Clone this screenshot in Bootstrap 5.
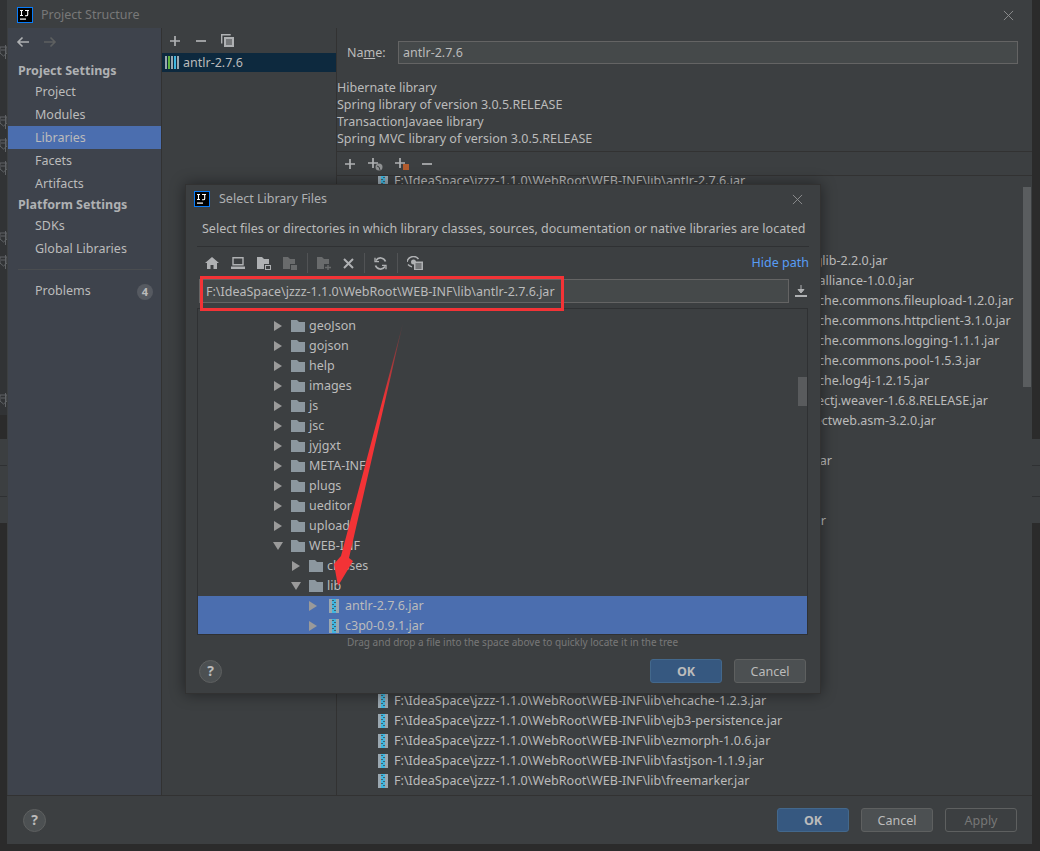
<!DOCTYPE html>
<html lang="en">
<head>
  <meta charset="UTF-8">
  <title>Project Structure</title>
  <meta name="viewport" content="width=device-width, initial-scale=1">
  <link href="https://cdn.jsdelivr.net/npm/bootstrap@5.3.3/dist/css/bootstrap.min.css" rel="stylesheet">
  <style>
    html, body { height: 851px; overflow: hidden; }
    body { background: #2b2b2b; font-family: "Noto Sans", "Liberation Sans", sans-serif; font-size: 12.5px; color: #bbbbbb; position: relative; line-height: 1; }
    svg { display: block; flex: none; }
    .gutter { position: absolute; top: 0; width: 7px; height: 415px; background: #313335; }
    .gutter-l { left: 0; }
    .gutter-r { left: 1032px; width: 8px; background: #2b2b2b; }
    .under-bar { position: absolute; top: 439px; height: 84px; width: 7px; left: 0; background: linear-gradient(#3c3f41 26px, #2f3133 26px, #2f3133 27px, #3c3f41 27px, #3c3f41 57px, #2f3133 57px, #2f3133 58px, #3c3f41 58px); }
    .under-bar-r { left: 1032px; width: 8px; }
    .win { position: absolute; left: 7px; top: 0; width: 1025px; height: 844px; background: #3c3f41; }
    .win-title { height: 28px; padding: 2px 0 0 10px; color: #787878; }
    .win-close { margin-left: auto; margin-right: 18px; }
    .win-body { height: 768px; border-bottom: 1px solid #323232; }
    .side { width: 154px; margin-left: 1px; background: #3e434c; border-right: 1px solid #323232; padding-top: 3px; }
    .side-nav { height: 21px; padding-left: 8px; gap: 13px; margin-bottom: 9px; }
    .side-head { height: 19px; padding: 2px 0 0 10px; font-weight: 700; color: #afb1b3; }
    .side-item { height: 23px; padding: 2px 0 0 27px; }
    .side-item.on { background: #4b6eaf; }
    .side-sep { height: 1px; background: #4a4d50; margin: 9px 9px 9px 10px; }
    .side-badge { width: 16px; height: 16px; border-radius: 50%; background: #565a61; margin-left: auto; margin-right: 8px; font-size: 11px; font-weight: 700; }
    .mid { width: 175px; border-right: 1px solid #323232; }
    .mid-bar { height: 25px; padding-left: 7px; gap: 14px; }
    .mid-sel { height: 19px; background: #0d293e; padding-left: 3px; gap: 4px; }
    .mid-sel span { padding-top: 2px; }
    .det { flex: 1; min-width: 0; }
    .name-row { height: 36px; margin-top: 13px; }
    .name-row label { margin: 0 10px; width: 41px; height: 23px; padding-top: 2px; }
    .fake-input { background: #45494a; border: 1px solid #646464; height: 23px; padding: 2px 0 0 4px; color: #bbbbbb; }
    .name-row .fake-input { width: 620px; }
    .det-lines { padding-top: 5px; height: 74px; }
    .det-line { height: 17px; }
    .det-bar { height: 25px; border-top: 1px solid #323232; border-bottom: 1px solid #323232; padding-left: 7px; gap: 11px; }
    .det-list { position: relative; flex: 1; overflow: hidden; }
    .jar-row { height: 20px; padding-left: 41px; gap: 6px; white-space: nowrap; font-size: 12.6px; }
    .det-scroll + .jar-row { margin-top: -5px; }
    .jar-row.long-name { font-size: 12.5px; }
    .det-scroll { position: absolute; right: 1px; top: 11px; width: 8px; height: 200px; background: #5a5d5f; }
    .win-foot { height: 47px; padding: 1px 15px 0 16px; gap: 12px; }
    .help { width: 23px; height: 23px; border-radius: 50%; background: #4c5052; border: 1px solid #5e6060; color: #bbbbbb; font-weight: 700; font-size: 14px; margin-right: auto; }
    .ij-btn { width: 72px; height: 24px; border-radius: 3px; background: #4c5052; border: 1px solid #5e6060; color: #bbbbbb; padding: 2px 0 0; font-size: 12.5px; line-height: 1; }
    .ij-btn:hover { background: #4c5052; border-color: #5e6060; color: #bbbbbb; }
    .ij-btn.pri { background: #365880; border-color: #43688c; font-weight: 700; }
    .ij-btn.off, .ij-btn.off:disabled { background: transparent; border-color: #5e6060; color: #777777; opacity: 1; }
    .dlg { position: absolute; left: 185px; top: 184px; width: 636px; height: 510px; background: #3c3f41; box-shadow: 0 0 14px rgba(0,0,0,.45); border: 1px solid #323232; }
    .dlg-title { height: 28px; padding-left: 8px; gap: 9px; color: #afb1b3; }
    .dlg-close { margin-left: auto; margin-right: 17px; }
    .dlg-desc { height: 34px; padding-left: 5px; border-bottom: 1px solid #2f3133; margin: 0 11px; white-space: nowrap; }
    .dlg-bar { height: 32px; padding-left: 19px; margin-right: 11px; }
    .dlg-bar svg { margin-right: 12px; }
    .tool-sep { width: 1px; height: 20px; background: #515355; margin: 0 9px 0 -2px; }
    .hide-link { margin-left: auto; color: #589df6; }
    .path-row { height: 24px; padding-left: 13px; }
    .path-row .fake-input { width: 590px; height: 24px; padding-left: 6px; white-space: nowrap; }
    .path-row svg { margin-left: 6px; }
    .tree { position: relative; margin: 5px 12px 0 11px; height: 327px; padding-top: 7px; border: 1px solid #2f3133; overflow: hidden; }
    .tree-row { height: 20px; white-space: nowrap; }
    .tree-row.on { background: #4b6eaf; }
    .lv1 { padding-left: 75px; }
    .lv2 { padding-left: 93px; }
    .lv3 { padding-left: 110px; }
    .tree-row .arr { margin-right: 8px; }
    .tree-row .fold { margin-right: 4px; }
    .tree-row .jarico { margin: 0 6px 0 3px; }
    .tree-scroll { position: absolute; right: 0; top: 68px; width: 9px; height: 29px; background: #595b5d; }
    .tree-tip { padding-left: 161px; height: 14px; font-size: 10px; color: #787878; }
    .dlg-foot { position: absolute; left: 13px; right: 14px; top: 474px; gap: 12px; }
    .anno { position: absolute; left: 0; top: 0; pointer-events: none; }
    .anno-box { position: absolute; left: 200px; top: 276px; width: 364px; height: 35px; border: 3px solid #f33336; }
  </style>
</head>
<body>
  <svg width="0" height="0" class="position-absolute">
    <symbol id="ij" viewBox="0 0 16 16"><rect x=".5" y=".5" width="15" height="15" fill="#000" stroke="#087cfa"/><rect x="3" y="11.5" width="6" height="1.2" fill="#fff"/><path d="M3 3.5h3M4.5 3.5v5M3 8.5h3M8 3.5h4M10.7 3.5v4.2q0 1-1.2 1H8" fill="none" stroke="#fff" stroke-width="1.1"/></symbol>
    <symbol id="jar" viewBox="0 0 10 14"><rect width="10" height="14" fill="#9aa7b0"/><rect x="3" width="4" height="14" fill="#40b6e0"/><path d="M3 1.5h2M5 3.5h2M3 5.5h2M5 7.5h2M3 9.5h2M5 11.5h2" stroke="#3c3f41" stroke-width=".7"/></symbol>
    <symbol id="fold" viewBox="0 0 14 12"><path d="M0 0h6l2 2h6v10H0z" fill="#9aa7b0" opacity=".85"/></symbol>
    <symbol id="right" viewBox="0 0 10 10"><path d="M1 0l8 5-8 5z" fill="#9a9a9a"/></symbol>
    <symbol id="down" viewBox="0 0 10 10"><path d="M0 1h10L5 9z" fill="#9a9a9a"/></symbol>
    <symbol id="plus" viewBox="0 0 12 12"><path d="M1 6h10M6 1v10" stroke="#afb1b3" stroke-width="1.7"/></symbol>
    <symbol id="minus" viewBox="0 0 12 12"><path d="M1 6h10" stroke="#afb1b3" stroke-width="1.7"/></symbol>
    <symbol id="x" viewBox="0 0 12 12"><path d="M1 1l10 10M11 1L1 11" stroke="#8f9192" stroke-width="1"/></symbol>
    <symbol id="foldmark" viewBox="0 0 7 14"><path d="M5.500 0v14M0 2h7v6l-3.500 3L0 8zM1 5h4" fill="none" stroke="#606366"/></symbol>
  </svg>

  <!-- editor behind the dialogs -->
  <div class="gutter gutter-l d-flex flex-column" id="gutter"></div>
  <div class="gutter gutter-r"></div>
  <div class="under-bar"></div>
  <div class="under-bar under-bar-r"></div>

  <div class="win d-flex flex-column">
    <div class="win-title d-flex align-items-center gap-2">
      <svg width="16" height="16"><use href="#ij"/></svg>
      <span>Project Structure</span>
      <svg class="win-close" width="11" height="11"><use href="#x"/></svg>
    </div>
    <div class="win-body d-flex">
      <div class="side d-flex flex-column">
        <div class="side-nav d-flex align-items-center">
          <svg width="14" height="12" viewBox="0 0 14 12"><path d="M13 6H2M6.5 1.5L2 6l4.500 4.500" fill="none" stroke="#afb1b3" stroke-width="1.6"/></svg>
          <svg width="14" height="12" viewBox="0 0 14 12"><path d="M1 6h11M7.500 1.500L12 6l-4.500 4.500" fill="none" stroke="#5e6060" stroke-width="1.6"/></svg>
        </div>
        <div class="side-head d-flex align-items-center">Project Settings</div>
        <div class="side-item d-flex align-items-center">Project</div>
        <div class="side-item d-flex align-items-center">Modules</div>
        <div class="side-item on d-flex align-items-center">Libraries</div>
        <div class="side-item d-flex align-items-center">Facets</div>
        <div class="side-item d-flex align-items-center">Artifacts</div>
        <div class="side-head d-flex align-items-center">Platform Settings</div>
        <div class="side-item d-flex align-items-center">SDKs</div>
        <div class="side-item d-flex align-items-center">Global Libraries</div>
        <div class="side-sep"></div>
        <div class="side-item d-flex align-items-center">Problems<span class="side-badge d-flex align-items-center justify-content-center">4</span></div>
      </div>
      <div class="mid d-flex flex-column">
        <div class="mid-bar d-flex align-items-center">
          <svg width="12" height="12"><use href="#plus"/></svg>
          <svg width="12" height="12"><use href="#minus"/></svg>
          <svg width="13" height="13" viewBox="0 0 13 13"><path d="M.7 0v9.500M.7.700h9" fill="none" stroke="#afb1b3" stroke-width="1.400"/><rect x="3" y="3" width="10" height="10" fill="#afb1b3"/><path d="M5 6h6M5 8h6M5 10h6" stroke="#3c3f41"/></svg>
        </div>
        <div class="mid-sel d-flex align-items-center">
          <svg width="14" height="13" viewBox="0 0 14 13"><rect x="0" width="2" height="13" fill="#9aa7b0"/><rect x="3" width="2" height="13" fill="#62b543"/><rect x="6" width="2" height="13" fill="#9aa7b0"/><rect x="9" width="2" height="13" fill="#40b6e0"/><rect x="12" width="2" height="13" fill="#9aa7b0"/></svg>
          <span>antlr-2.7.6</span>
        </div>
      </div>
      <div class="det d-flex flex-column">
        <div class="name-row d-flex">
          <label class="d-flex align-items-center"><span>Na<u>m</u>e:</span></label>
          <div class="fake-input d-flex align-items-center">antlr-2.7.6</div>
        </div>
        <div class="det-lines">
          <div class="det-line">Hibernate library</div>
          <div class="det-line">Spring library of version 3.0.5.RELEASE</div>
          <div class="det-line">TransactionJavaee library</div>
          <div class="det-line">Spring MVC library of version 3.0.5.RELEASE</div>
        </div>
        <div class="det-bar d-flex align-items-center">
          <svg width="12" height="12"><use href="#plus"/></svg>
          <svg width="16" height="14" viewBox="0 0 16 14"><path d="M1 6h10M6 1v10" stroke="#afb1b3" stroke-width="1.700"/><circle cx="12" cy="10" r="3.500" fill="#8f9192"/><path d="M10 9l2 1 1 3" stroke="#3c3f41" fill="none"/></svg>
          <svg width="16" height="14" viewBox="0 0 16 14"><path d="M1 6h10M6 1v10" stroke="#afb1b3" stroke-width="1.700"/><rect x="9" y="7" width="6" height="6" fill="#b35c2e"/></svg>
          <svg width="12" height="12"><use href="#minus"/></svg>
        </div>
        <div class="det-list" id="jarList">
          <div class="det-scroll"></div>
        </div>
      </div>
    </div>
    <div class="win-foot d-flex align-items-center">
      <div class="help d-flex align-items-center justify-content-center">?</div>
      <button type="button" class="btn ij-btn pri">OK</button>
      <button type="button" class="btn ij-btn">Cancel</button>
      <button type="button" class="btn ij-btn off" disabled>Apply</button>
    </div>
  </div>

  <div class="dlg">
    <div class="dlg-title d-flex align-items-center">
      <svg width="16" height="16"><use href="#ij"/></svg>
      <span>Select Library Files</span>
      <svg class="dlg-close" width="11" height="11"><use href="#x"/></svg>
    </div>
    <div class="dlg-desc d-flex align-items-center">Select files or directories in which library classes, sources, documentation or native libraries are located</div>
    <div class="dlg-bar d-flex align-items-center">
      <svg width="14" height="12" viewBox="0 0 14 12"><path d="M7 0L0 6h2v6h3.500V8h3v4H12V6h2z" fill="#afb1b3"/></svg>
      <svg width="14" height="12" viewBox="0 0 14 12"><path d="M2 .7h10v7H2z" fill="none" stroke="#afb1b3" stroke-width="1.400"/><rect y="9.500" width="14" height="2.500" fill="#afb1b3"/></svg>
      <svg width="14" height="13" viewBox="0 0 14 13"><path d="M0 0h5l2 2h5v5H7v5H0z" fill="#afb1b3"/><rect x="8.500" y="8.500" width="5" height="4" fill="none" stroke="#afb1b3"/></svg>
      <svg width="14" height="13" viewBox="0 0 14 13"><path d="M0 0h5l2 2h5v5H7v5H0z" fill="#696b6c"/><rect x="8" y="8" width="6" height="5" fill="#696b6c"/></svg>
      <span class="tool-sep"></span>
      <svg width="14" height="13" viewBox="0 0 14 13"><path d="M0 0h5l2 2h5v5H7v5H0z" fill="#696b6c"/><path d="M8 10.500h6M11 8v5" stroke="#696b6c" stroke-width="1.400"/></svg>
      <svg width="11" height="11" viewBox="0 0 11 11"><path d="M1 1l9 9M10 1l-9 9" stroke="#afb1b3" stroke-width="2"/></svg>
      <span class="tool-sep"></span>
      <svg width="13" height="13" viewBox="0 0 13 13"><path d="M11.500 4.500A5.300 5.300 0 0 0 2 3.500M1.500 8.500A5.300 5.300 0 0 0 11 9.500" fill="none" stroke="#afb1b3" stroke-width="1.700"/><path d="M1 .7v4h4M12 12.300v-4H8" fill="none" stroke="#afb1b3" stroke-width="1.300"/></svg>
      <span class="tool-sep"></span>
      <svg width="16" height="14" viewBox="0 0 16 14"><path d="M0 6a6.500 6.500 0 0 1 11.500-3" fill="none" stroke="#afb1b3" stroke-width="1.500"/><circle cx="6.500" cy="6" r="2.500" fill="#afb1b3"/><path d="M1 8.500q1.500 1.800 4 2.300" fill="none" stroke="#afb1b3" stroke-width="1.300"/><rect x="7" y="5.500" width="9" height="8.500" fill="#afb1b3"/><path d="M8.500 8h6M8.500 10h6M8.500 12h6" stroke="#3c3f41"/></svg>
      <span class="hide-link">Hide path</span>
    </div>
    <div class="path-row d-flex align-items-center">
      <div class="fake-input d-flex align-items-center">F:\IdeaSpace\jzzz-1.1.0\WebRoot\WEB-INF\lib\antlr-2.7.6.jar</div>
      <svg width="12" height="12" viewBox="0 0 12 12"><path d="M6 0v5M3 4.500L6 8l3-3.500z" fill="#afb1b3" stroke="#afb1b3"/><rect y="10" width="12" height="2" fill="#afb1b3"/></svg>
    </div>
    <div class="tree" id="tree"><div class="tree-scroll"></div></div>
    <div class="tree-tip d-flex align-items-center">Drag and drop a file into the space above to quickly locate it in the tree</div>
    <div class="dlg-foot d-flex align-items-center">
      <div class="help d-flex align-items-center justify-content-center">?</div>
      <button type="button" class="btn ij-btn pri">OK</button>
      <button type="button" class="btn ij-btn">Cancel</button>
    </div>
  </div>

  <!-- red annotation on top of the screenshot -->
  <div class="anno-box"></div>
  <svg class="anno" width="1040" height="851">
    <defs><linearGradient id="fade" x1="0" y1="0" x2="0" y2="1"><stop offset="0" stop-color="#f33336" stop-opacity=".1"/><stop offset=".3" stop-color="#f33336"/></linearGradient></defs>
    <polygon points="403,323 349,558 353,561 338,586 334,564 341,556" fill="url(#fade)"/>
  </svg>

  <script>
    const prefix = "F:\\IdeaSpace\\jzzz-1.1.0\\WebRoot\\WEB-INF\\lib\\";
    // empty entries sit completely behind the dialog
    const jars = ["antlr-2.7.6.jar", "", "", "",
      "com.springsource.net.sf.cglib-2.2.0.jar", "com.springsource.org.aopalliance-1.0.0.jar",
      "com.springsource.org.apache.commons.fileupload-1.2.0.jar",
      "com.springsource.org.apache.commons.httpclient-3.1.0.jar",
      "com.springsource.org.apache.commons.logging-1.1.1.jar",
      "com.springsource.org.apache.commons.pool-1.5.3.jar",
      "com.springsource.org.apache.log4j-1.2.15.jar",
      "com.springsource.org.aspectj.weaver-1.6.8.RELEASE.jar",
      "com.springsource.org.objectweb.asm-3.2.0.jar", "",
      "commons-collections-3.2.jar", "", "", "commons-httpclient-3.1.jar",
      "", "", "", "", "", "", "", "",
      "ehcache-1.2.3.jar", "ejb3-persistence.jar", "ezmorph-1.0.6.jar", "fastjson-1.1.9.jar", "freemarker.jar"];
    const jarList = document.getElementById("jarList");
    jars.forEach(function (name) {
      const row = document.createElement("div");
      row.className = "jar-row d-flex align-items-center" + (name.startsWith("com.") ? " long-name" : "");
      if (name) {
        row.innerHTML = '<svg width="10" height="14"><use href="#jar"/></svg><span>' + prefix + name + "</span>";
      }
      jarList.appendChild(row);
    });

    const rows = [[1, "geoJson"], [1, "gojson"], [1, "help"], [1, "images"], [1, "js"], [1, "jsc"], [1, "jyjgxt"],
      [1, "META-INF"], [1, "plugs"], [1, "ueditor"], [1, "upload"], [1, "WEB-INF", true], [2, "classes"], [2, "lib", true],
      [3, "antlr-2.7.6.jar"], [3, "c3p0-0.9.1.jar"]];
    const tree = document.getElementById("tree");
    rows.forEach(function (r) {
      const row = document.createElement("div");
      row.className = "tree-row d-flex align-items-center lv" + r[0] + (r[0] === 3 ? " on" : "");
      const icon = r[0] === 3
        ? '<svg class="jarico" width="10" height="14"><use href="#jar"/></svg>'
        : '<svg class="fold" width="14" height="12"><use href="#fold"/></svg>';
      row.innerHTML = '<svg class="arr" width="10" height="10"><use href="#' + (r[2] ? "down" : "right") + '"/></svg>' + icon + "<span>" + r[1] + "</span>";
      tree.appendChild(row);
    });

    // fold markers of the editor gutter showing at the window's left edge
    const gutter = document.getElementById("gutter");
    [45, 115, 138, 161, 231, 255, 393].forEach(function (y, i, all) {
      const gap = y - (i ? all[i - 1] + 14 : 0);
      gutter.insertAdjacentHTML("beforeend", '<svg width="7" height="14" style="margin-top:' + gap + 'px"><use href="#foldmark"/></svg>');
    });
  </script>
</body>
</html>
